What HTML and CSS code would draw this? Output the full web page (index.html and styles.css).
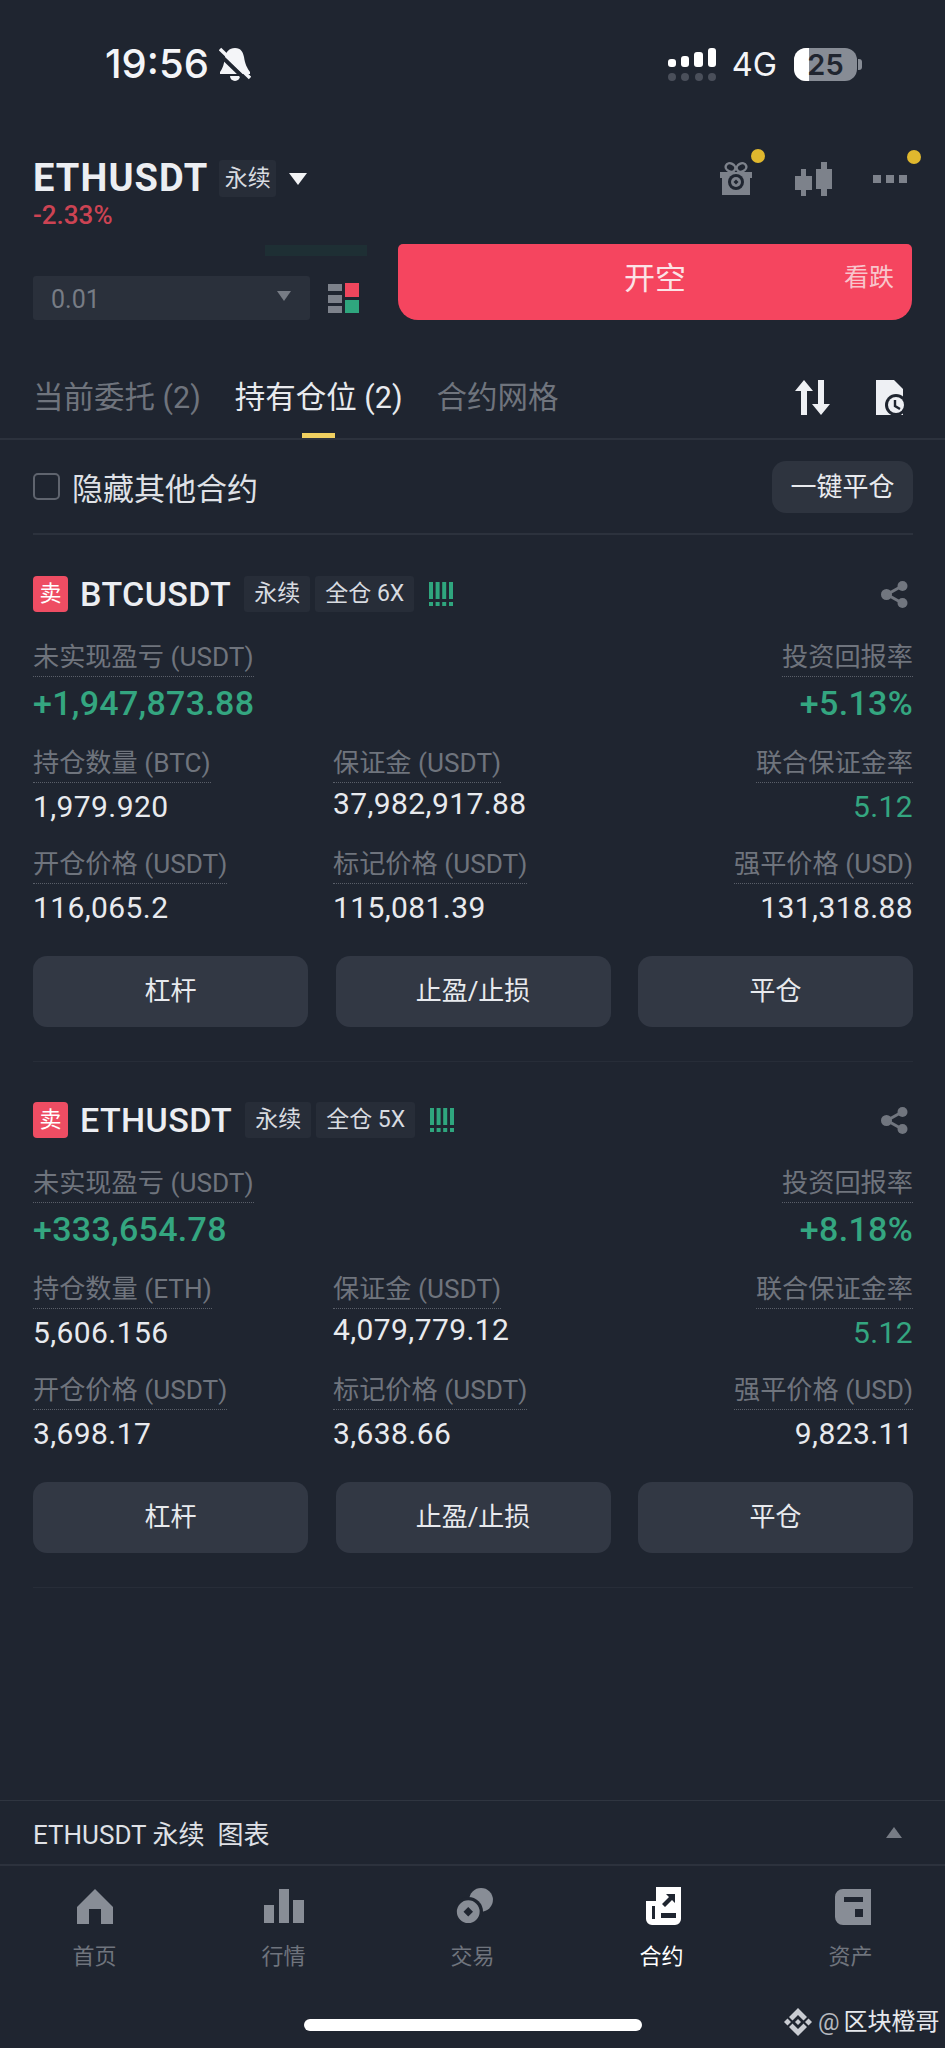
FILE: index.html
```html
<!DOCTYPE html>
<html lang="zh-CN">
<head>
<meta charset="utf-8">
<title>ETHUSDT</title>
<link rel="stylesheet" href="styles.css">
</head>
<body>
<div class="screen">
  <div class="status">
    <div class="status-left">
      <span class="time">19:56</span>
      <svg class="bell" viewBox="0 0 32 34"><path d="M16 1c-6 0-9 4-10 9-1 7-2 11-5 15v2h30v-2c-3-4-5-8-6-15-1-5-3-9-9-9z" fill="#f4f5f8"/><path d="M11 29h10a5 5 0 0 1-10 0z" fill="#f4f5f8"/><path d="M-2 5L28 34" stroke="#1f2530" stroke-width="4"/><path d="M1 2L31 31" stroke="#f4f5f8" stroke-width="3.4"/></svg>
    </div>
    <div class="status-right">
      <svg class="signal" viewBox="0 0 48 33"><g fill="#fff"><rect x="0" y="11" width="8" height="8" rx="3"/><rect x="13" y="8" width="8" height="11" rx="3"/><rect x="26" y="4" width="9" height="15" rx="3"/><rect x="40" y="0" width="8" height="19" rx="3"/></g><g fill="#4a4f5a"><rect x="0" y="25" width="8" height="8" rx="4"/><rect x="13" y="25" width="8" height="8" rx="4"/><rect x="27" y="25" width="8" height="8" rx="4"/><rect x="40" y="25" width="8" height="8" rx="4"/></g></svg>
      <span class="net">4G</span>
      <div class="battery"><span class="battery-fill"></span><span class="battery-num">25</span></div>
      <span class="battery-cap"></span>
    </div>
  </div>

  <div class="head">
    <div class="head-title">
      <span class="symbol">ETHUSDT</span>
      <span class="tag tag-head">永续</span>
      <span class="caret"></span>
    </div>
    <div class="head-icons">
      <span class="hicon gift">
        <svg viewBox="0 0 32 33"><g fill="none" stroke="#7d828b" stroke-width="2.4"><ellipse cx="10.500" cy="5.500" rx="5" ry="4" transform="rotate(25 10.500 5.500)"/><ellipse cx="21.500" cy="5.500" rx="5" ry="4" transform="rotate(-25 21.500 5.500)"/></g><path d="M0 10h32v6h-2v17H2V16H0z" fill="#7d828b"/><circle cx="16" cy="20" r="8" fill="#1f2530"/><circle cx="16" cy="20" r="5" fill="#7d828b"/><path d="M16 17.500l2.500 2.500-2.500 2.500-2.500-2.500z" fill="#1f2530"/></svg>
        <i class="dot"></i>
      </span>
      <span class="hicon candle">
        <svg viewBox="0 0 37 34"><g fill="#7d828b"><rect x="0" y="14" width="17" height="14"/><rect x="6" y="7" width="5" height="27"/><rect x="21" y="7" width="16" height="20"/><rect x="26" y="0" width="6" height="34"/></g></svg>
      </span>
      <span class="hicon more">
        <svg viewBox="0 0 34 8"><g fill="#7d828b"><rect x="0" width="8" height="8"/><rect x="13" width="8" height="8"/><rect x="26" width="8" height="8"/></g></svg>
        <i class="dot dot-more"></i>
      </span>
    </div>
  </div>
  <div class="change">-2.33%</div>

  <div class="order">
    <div class="order-left">
      <div class="depth-bar"></div>
      <div class="order-inputs">
        <div class="qty"><span class="qty-num">0.01</span><i class="qty-caret"></i></div>
        <svg class="book" viewBox="0 0 31 30"><g fill="#7d828b"><rect x="0" y="1" width="14" height="7"/><rect x="0" y="12" width="14" height="8"/><rect x="0" y="23" width="14" height="7"/></g><rect x="17" y="0" width="14" height="14" fill="#f0465d"/><rect x="17" y="17" width="14" height="13" fill="#2fa67e"/></svg>
      </div>
    </div>
    <div class="short">
      <span class="short-main">开空</span>
      <span class="short-sub">看跌</span>
    </div>
  </div>

  <div class="tabs">
    <span class="tab">当前委托 (2)</span>
    <span class="tab tab-on">持有仓位 (2)</span>
    <span class="tab">合约网格</span>
    <span class="tabs-icons">
      <svg class="tab-sort" viewBox="0 0 35 35"><path d="M9 0l9 11h-6v24H6V11H0z" fill="#eef0f4"/><path d="M26 35l9-11h-6V0h-6v24h-6z" fill="#eef0f4"/></svg>
      <svg class="tab-file" viewBox="0 0 30 35"><path d="M0 0h18l9 9v26H0z" fill="#eef0f4"/><circle cx="20" cy="25" r="11" fill="#1f2530"/><circle cx="20" cy="25" r="8" fill="#eef0f4"/><path d="M19 20v6l5 3" fill="none" stroke="#1f2530" stroke-width="2.4"/></svg>
    </span>
  </div>

  <div class="hide-row">
    <label class="hide-label"><span class="check"></span>隐藏其他合约</label>
    <span class="close-all">一键平仓</span>
  </div>

  <section class="card">
    <div class="card-head">
      <span class="sell">卖</span>
      <span class="card-symbol">BTCUSDT</span>
      <span class="tag">永续</span>
      <span class="tag tag-wide">全仓 6X</span>
      <svg class="risk" viewBox="0 0 24 24"><g fill="#2fa67e"><rect x="0" width="4" height="17"/><rect x="6.600" width="4" height="17"/><rect x="13.200" width="4" height="17"/><rect x="20" width="4" height="17"/><rect x="0" y="20" width="4" height="4"/><rect x="6.600" y="20" width="4" height="4"/><rect x="13.200" y="20" width="4" height="4"/><rect x="20" y="20" width="4" height="4"/></g></svg>
      <svg class="share" viewBox="0 0 27 27"><g fill="#71767f"><circle cx="21.500" cy="5" r="5"/><circle cx="5.500" cy="13.500" r="5.500"/><circle cx="21.500" cy="22" r="5"/></g><path d="M21 5L6 13.500 21 22" fill="none" stroke="#71767f" stroke-width="3"/></svg>
    </div>
    <div class="pnl">
      <div class="cell"><span class="lbl">未实现盈亏 (USDT)</span><span class="pnl-val">+1,947,873.88</span></div>
      <div class="cell cell-r"><span class="lbl">投资回报率</span><span class="pnl-val">+5.13%</span></div>
    </div>
    <div class="stats">
      <div class="cell"><span class="lbl">持仓数量 (BTC)</span><span class="val">1,979.920</span></div>
      <div class="cell"><span class="lbl">保证金 (USDT)</span><span class="val val-lift">37,982,917.88</span></div>
      <div class="cell cell-r"><span class="lbl">联合保证金率</span><span class="val val-green">5.12</span></div>
      <div class="cell"><span class="lbl">开仓价格 (USDT)</span><span class="val">116,065.2</span></div>
      <div class="cell"><span class="lbl">标记价格 (USDT)</span><span class="val">115,081.39</span></div>
      <div class="cell cell-r"><span class="lbl">强平价格 (USD)</span><span class="val">131,318.88</span></div>
    </div>
    <div class="actions">
      <span class="action">杠杆</span>
      <span class="action">止盈/止损</span>
      <span class="action">平仓</span>
    </div>
  </section>

  <section class="card">
    <div class="card-head">
      <span class="sell">卖</span>
      <span class="card-symbol">ETHUSDT</span>
      <span class="tag">永续</span>
      <span class="tag tag-wide">全仓 5X</span>
      <svg class="risk" viewBox="0 0 24 24"><g fill="#2fa67e"><rect x="0" width="4" height="17"/><rect x="6.600" width="4" height="17"/><rect x="13.200" width="4" height="17"/><rect x="20" width="4" height="17"/><rect x="0" y="20" width="4" height="4"/><rect x="6.600" y="20" width="4" height="4"/><rect x="13.200" y="20" width="4" height="4"/><rect x="20" y="20" width="4" height="4"/></g></svg>
      <svg class="share" viewBox="0 0 27 27"><g fill="#71767f"><circle cx="21.500" cy="5" r="5"/><circle cx="5.500" cy="13.500" r="5.500"/><circle cx="21.500" cy="22" r="5"/></g><path d="M21 5L6 13.500 21 22" fill="none" stroke="#71767f" stroke-width="3"/></svg>
    </div>
    <div class="pnl">
      <div class="cell"><span class="lbl">未实现盈亏 (USDT)</span><span class="pnl-val">+333,654.78</span></div>
      <div class="cell cell-r"><span class="lbl">投资回报率</span><span class="pnl-val">+8.18%</span></div>
    </div>
    <div class="stats">
      <div class="cell"><span class="lbl">持仓数量 (ETH)</span><span class="val">5,606.156</span></div>
      <div class="cell"><span class="lbl">保证金 (USDT)</span><span class="val val-lift">4,079,779.12</span></div>
      <div class="cell cell-r"><span class="lbl">联合保证金率</span><span class="val val-green">5.12</span></div>
      <div class="cell"><span class="lbl">开仓价格 (USDT)</span><span class="val">3,698.17</span></div>
      <div class="cell"><span class="lbl">标记价格 (USDT)</span><span class="val">3,638.66</span></div>
      <div class="cell cell-r"><span class="lbl">强平价格 (USD)</span><span class="val">9,823.11</span></div>
    </div>
    <div class="actions">
      <span class="action">杠杆</span>
      <span class="action">止盈/止损</span>
      <span class="action">平仓</span>
    </div>
  </section>

  <div class="chart-bar">
    <span>ETHUSDT 永续&nbsp; 图表</span>
    <i class="chart-caret"></i>
  </div>

  <nav class="nav">
    <div class="nav-item">
      <svg viewBox="0 0 40 38"><path d="M20 2l18 18v17H26V22H14v15H2V20z" fill="#888d96"/></svg>
      <span>首页</span>
    </div>
    <div class="nav-item">
      <svg viewBox="0 0 40 38"><g fill="#888d96"><rect x="0" y="18" width="10" height="18"/><rect x="15" y="2" width="10" height="34"/><rect x="29" y="13" width="11" height="23"/></g></svg>
      <span>行情</span>
    </div>
    <div class="nav-item">
      <svg viewBox="0 0 40 40"><circle cx="28.500" cy="13.500" r="12.500" fill="#888d96"/><circle cx="15" cy="26" r="15.500" fill="#1f2530"/><path fill-rule="evenodd" d="M15 14a12 12 0 1 1 0 24 12 12 0 0 1 0-24zm0 7l-5 5 5 5 5-5z" fill="#888d96"/></svg>
      <span>交易</span>
    </div>
    <div class="nav-item nav-on">
      <svg viewBox="0 0 40 38"><path fill-rule="evenodd" d="M14 0H39V32a6 6 0 0 1-6 6H10a6 6 0 0 1-6-6V14H14zM24 7h9v9l-3-3-7 7-3-3 7-7zM10 19h3v13h-3zM19 26h15v5H19z" fill="#fff"/></svg>
      <span>合约</span>
    </div>
    <div class="nav-item">
      <svg viewBox="0 0 40 38"><path fill-rule="evenodd" d="M12 2H40V38H12a8 8 0 0 1-8-8V10a8 8 0 0 1 8-8zM13 10h19v5H13zM24 22h8v8h-8z" fill="#888d96"/></svg>
      <span>资产</span>
    </div>
  </nav>
  <div class="home-bar"></div>

  <div class="mark">
    <svg viewBox="0 0 28 28"><g fill="#c9ccd2"><path d="M14 0L23 9 19.500 12.500 14 7 8.500 12.500 5 9z"/><path d="M14 28L23 19 19.500 15.500 14 21 8.500 15.500 5 19z"/><path d="M3.500 10.500L7 14 3.500 17.500 0 14z"/><path d="M24.500 10.500L28 14 24.500 17.500 21 14z"/><path d="M14 11L17 14 14 17 11 14z"/></g></svg>
    <span class="mark-at">@</span><span>区块橙哥</span>
  </div>
</div>
</body>
</html>
```

FILE: styles.css
```css
* { box-sizing: border-box; }
html, body { margin: 0; padding: 0; background: #1f2530; }
body { font-family: Roboto, "Noto Sans CJK SC", sans-serif; color: #e8eaee; }
i { display: block; }

.screen { position: relative; width: 945px; height: 2048px; display: flex; flex-direction: column; overflow: hidden; }

/* status bar */
.status { height: 128px; display: flex; justify-content: space-between; align-items: center; padding: 0 83px 0 105px; flex: none; }
.status-left, .status-right { display: flex; align-items: center; }
.time { font-family: Inter, sans-serif; font-size: 40px; font-weight: 500; color: #f4f5f8; line-height: 46px; }
.bell { width: 32px; height: 34px; margin-left: 10px; }
.signal { width: 48px; height: 33px; }
.net { font-family: Inter, sans-serif; font-size: 32.500px; color: #f4f5f8; margin: 0 17px 0 16px; }
.battery { position: relative; width: 63px; height: 33px; background: #878c95; border-radius: 12px; overflow: hidden; display: flex; align-items: center; justify-content: center; }
.battery-fill { position: absolute; left: 0; top: 0; bottom: 0; width: 15px; background: #fff; }
.battery-num { position: relative; font-family: Inter, sans-serif; font-weight: 600; font-size: 29px; color: #20252f; }
.battery-cap { width: 4px; height: 11px; margin-left: 1px; background: #878c95; border-radius: 0 3px 3px 0; }

/* header */
.head { margin-top: 32px; padding: 0 33px; height: 37px; display: flex; justify-content: space-between; align-items: center; flex: none; }
.head-title { display: flex; align-items: center; }
.symbol { font-size: 38px; font-weight: 700; color: #eceef2; line-height: 37px; letter-spacing: 1.100px; }
.tag { height: 36px; padding: 0 10px; background: #272d38; border-radius: 3px; color: #d8dbe0; font-size: 23px; line-height: 36px; }
.tag-head { margin-left: 11px; height: 37px; width: 57px; padding: 0; text-align: center; line-height: 37px; }
.caret { margin-left: 13px; width: 0; height: 0; border-left: 9px solid transparent; border-right: 9px solid transparent; border-top: 12px solid #f2f3f5; }
.head-icons { display: flex; align-items: center; margin-right: 5px; }
.hicon { position: relative; display: block; }
.hicon svg { display: block; width: 100%; height: 100%; }
.gift { width: 32px; height: 33px; margin-right: 43px; }
.candle { width: 37px; height: 34px; margin-right: 41px; }
.more { width: 34px; height: 8px; }
.dot { position: absolute; width: 14px; height: 14px; border-radius: 50%; background: #e0b82e; right: -13px; top: -13px; }
.dot-more { right: -14px; top: -25px; }
.change { margin: 5px 0 0 33px; height: 26px; font-size: 26px; line-height: 26px; color: #cc4353; font-weight: 500; flex: none; }

/* order row */
.order { margin-top: 16px; padding: 0 33px; height: 76px; display: flex; justify-content: space-between; flex: none; }
.order-left { width: 334px; display: flex; flex-direction: column; }
.depth-bar { align-self: flex-end; width: 102px; height: 11px; background: #1e2f34; margin-top: 1px; }
.order-inputs { margin-top: 20px; display: flex; align-items: center; justify-content: space-between; }
.qty { width: 277px; height: 44px; padding: 0 19px 0 18px; background: #2a303b; border-radius: 3px; display: flex; justify-content: space-between; align-items: center; color: #777c85; font-size: 25px; }
.qty-num { margin-top: 2px; }
.qty-caret { width: 0; height: 0; border-left: 7px solid transparent; border-right: 7px solid transparent; border-top: 10px solid #777c85; margin-top: -4px; }
.book { width: 31px; height: 30px; margin-right: 8px; }
.short { position: relative; width: 514px; height: 76px; background: #f5455f; border-radius: 5px 5px 20px 20px; display: flex; align-items: center; justify-content: center; color: #fbe3e6; }
.short-main { font-size: 31px; line-height: 40px; margin-top: -6px; }
.short-sub { position: absolute; right: 18px; top: 16px; font-size: 25px; line-height: 36px; color: #f8c5cc; }

/* tabs */
.tabs { position: relative; height: 120px; padding: 58px 39px 0 33px; border-bottom: 2px solid #2c323d; display: flex; align-items: flex-start; flex: none; }
.tab { font-size: 30.500px; line-height: 40px; color: #6f747d; margin-right: 34px; position: relative; height: 60px; }
.tab-on { color: #e8eaee; }
.tab-on::after { content: ""; position: absolute; left: 50%; margin-left: -17px; bottom: 0; width: 33px; height: 5px; background: #f0d060; }
.tabs-icons { margin-left: auto; margin-top: 2px; display: flex; align-items: center; }
.tab-sort { width: 35px; height: 35px; margin-right: 46px; }
.tab-file { width: 30px; height: 35px; }

/* hide row */
.hide-row { margin: 0 32px 1px 33px; height: 95px; padding: 0; border-bottom: 2px solid #2c323d; display: flex; justify-content: space-between; align-items: center; flex: none; }
.hide-label { display: flex; align-items: center; font-size: 31px; color: #dfe1e6; }
.check { width: 27px; height: 27px; margin-right: 12px; border: 2px solid #5f646e; border-radius: 5px; }
.close-all { width: 141px; height: 52px; background: #2e343f; border-radius: 14px; font-size: 26px; line-height: 52px; text-align: center; color: #e8eaee; }

/* position card */
.card { margin: 0 32px 0 33px; padding: 40px 0 34px; border-bottom: 1px solid #272d38; flex: none; }
.card-head { height: 36px; display: flex; align-items: center; }
.sell { width: 35px; height: 36px; background: #ee4d63; border-radius: 4px; color: #fff; font-size: 22px; line-height: 36px; text-align: center; }
.card-symbol { margin: 0 13px 0 12px; font-size: 34px; font-weight: 500; color: #eceef2; letter-spacing: 0.4px; }
.tag-wide { margin-left: 5px; }
.risk { width: 24px; height: 24px; margin-left: 15px; }
.share { width: 27px; height: 27px; margin-left: auto; margin-right: 5px; }
.pnl { margin-top: 30px; display: flex; justify-content: space-between; }
.cell { display: flex; flex-direction: column; align-items: flex-start; }
.cell-r { align-items: flex-end; }
.lbl { font-size: 26.200px; line-height: 30px; padding-bottom: 4px; color: #6f747d; border-bottom: 1px dotted #5a5f69; }
.pnl-val { font-size: 34px; line-height: 44px; font-weight: 500; color: #34a680; margin-top: 4px; letter-spacing: 0.3px; }
.stats { margin-top: 23px; display: grid; grid-template-columns: 300px 1fr auto; row-gap: 24px; }
.val { font-size: 30px; line-height: 36px; margin-top: 6px; color: #e8eaee; letter-spacing: 0.4px; }
.val-lift { margin-top: 3px; }
.val-green { color: #34a680; }
.actions { margin-top: 30px; display: grid; grid-template-columns: repeat(3, 275px); justify-content: space-between; }
.action { height: 71px; background: #323844; border-radius: 14px; font-size: 26px; line-height: 71px; text-align: center; color: #e8eaee; }

/* bottom */
.chart-bar { margin-top: auto; height: 66px; border-top: 1px solid #2f3540; border-bottom: 2px solid #2c323d; padding: 0 43px 0 33px; display: flex; justify-content: space-between; align-items: center; font-size: 26px; color: #dfe1e6; flex: none; }
.chart-caret { width: 0; height: 0; border-left: 8px solid transparent; border-right: 8px solid transparent; border-bottom: 11px solid #777c85; }
.nav { display: grid; grid-template-columns: repeat(5, 1fr); padding-top: 21px; flex: none; }
.nav-item { display: flex; flex-direction: column; align-items: center; color: #6f747d; font-size: 22px; line-height: 28px; }
.nav-item svg { width: 40px; height: 38px; margin-bottom: 18px; }
.nav-on { color: #fff; }
.home-bar { width: 338px; height: 12px; margin: 48px auto 17px; background: #fff; border-radius: 6px; flex: none; }
.mark { position: absolute; left: 784px; top: 2007px; display: flex; align-items: center; font-size: 24px; line-height: 30px; color: #e6e8ec; }
.mark svg { width: 28px; height: 28px; margin-right: 6px; }
.mark-at { color: #b5b8be; margin-right: 4px; }
```
